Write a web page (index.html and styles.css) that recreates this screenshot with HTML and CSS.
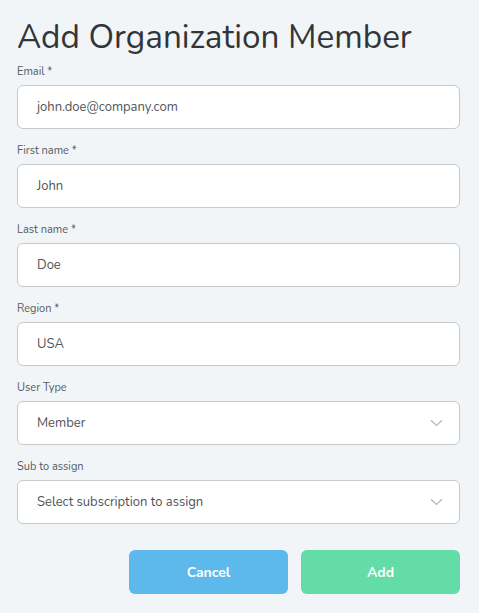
FILE: index.html
```html
<!DOCTYPE html>
<html lang="en">
<head>
<meta charset="utf-8">
<title>Add Organization Member</title>
<link rel="stylesheet" href="styles.css">
</head>
<body>
<main class="page">
  <h1 class="title">Add Organization Member</h1>
  <form class="form">
    <div class="field">
      <label class="label">Email *</label>
      <div class="control">john.doe@company.com</div>
    </div>
    <div class="field">
      <label class="label">First name *</label>
      <div class="control">John</div>
    </div>
    <div class="field">
      <label class="label">Last name *</label>
      <div class="control">Doe</div>
    </div>
    <div class="field">
      <label class="label">Region *</label>
      <div class="control">USA</div>
    </div>
    <div class="field">
      <label class="label">User Type</label>
      <div class="control select">
        <span>Member</span>
        <svg class="chevron" width="13" height="8" viewBox="0 0 13 8"><path d="M1 1.2 L6.5 6.5 L12 1.2" fill="none" stroke="#b3b7bb" stroke-width="1.2"/></svg>
      </div>
    </div>
    <div class="field">
      <label class="label">Sub to assign</label>
      <div class="control select">
        <span>Select subscription to assign</span>
        <svg class="chevron" width="13" height="8" viewBox="0 0 13 8"><path d="M1 1.2 L6.5 6.5 L12 1.2" fill="none" stroke="#b3b7bb" stroke-width="1.2"/></svg>
      </div>
    </div>
    <div class="actions">
      <button type="button" class="btn btn-cancel">Cancel</button>
      <button type="button" class="btn btn-add">Add</button>
    </div>
  </form>
</main>
</body>
</html>
```
FILE: styles.css
```css
html, body {
  margin: 0;
  padding: 0;
  background: #f2f5f8;
}
body {
  font-family: "Nunito", "Lato", "Open Sans", sans-serif;
  color: #3a3a3a;
}
.page {
  padding: 16px 19px 0 17px;
}
.title {
  margin: 0;
  font-size: 33.3px;
  font-weight: 400;
  line-height: 42px;
  color: #333638;
}
.form {
  display: flex;
  flex-direction: column;
  margin-top: 7px;
}
.field {
  display: flex;
  flex-direction: column;
  margin-bottom: 15px;
}
.label {
  font-size: 11px;
  line-height: 14px;
  color: #555a5e;
  margin-bottom: 6px;
}
.control {
  box-sizing: border-box;
  height: 44px;
  background: #fff;
  border: 1px solid #c6cacd;
  border-radius: 6px;
  padding: 0 16px 0 19px;
  display: flex;
  align-items: center;
  font-size: 13px;
  color: #505458;
}
.select {
  justify-content: space-between;
}
.chevron {
  display: block;
}
.actions {
  display: flex;
  justify-content: flex-end;
  gap: 13px;
  margin-top: 11px;
}
.btn {
  width: 159px;
  height: 44px;
  border: none;
  border-radius: 6px;
  color: #fff;
  font-family: inherit;
  font-size: 14px;
  font-weight: 700;
}
.btn-cancel {
  background: #5db8ec;
}
.btn-add {
  background: #63dca8;
}
```
